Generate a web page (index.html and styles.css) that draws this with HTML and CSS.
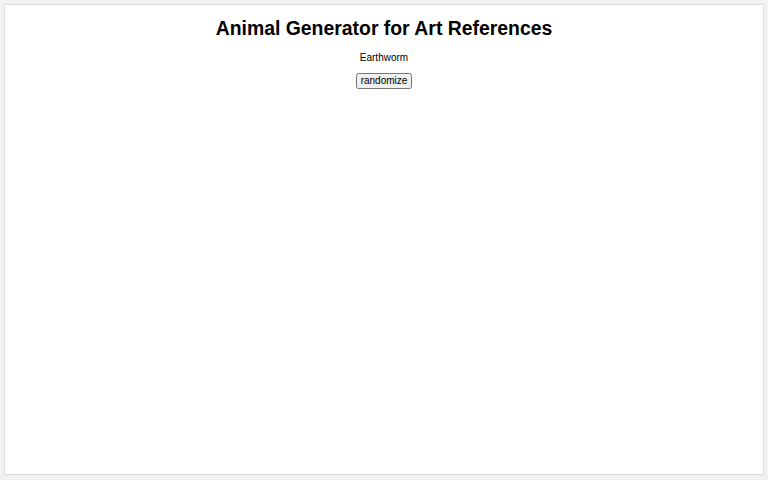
FILE: index.html
```html
<!DOCTYPE html>
<html>
<head>
    <title>Animal Generator</title>
    <link rel="stylesheet" href="styles.css">
</head>
<body>
    <div class="page">
        <h1>Animal Generator for Art References</h1>
        <p id="animal">Earthworm</p>
        <button id="randomize">randomize</button>
    </div>
</body>
</html>
```

FILE: styles.css
```css
body {
    margin: 0;
    padding: 4px;
    background-color: #f1f1f1;
    font-family: "Liberation Sans", Arial, sans-serif;
}
.page {
    height: 471px;
    box-sizing: border-box;
    background-color: #fff;
    border: 1px solid #dcdcdc;
    text-align: center;
    padding-top: 11px;
}
h1 {
    margin: 0;
    font-size: 19.4px;
    line-height: 24px;
}
p {
    margin: 12px 0 6px;
    font-size: 10px;
    line-height: 12px;
}
button {
    font-family: "Liberation Sans", Arial, sans-serif;
    font-size: 10px;
    line-height: 12px;
    padding: 0 3px;
}
```
